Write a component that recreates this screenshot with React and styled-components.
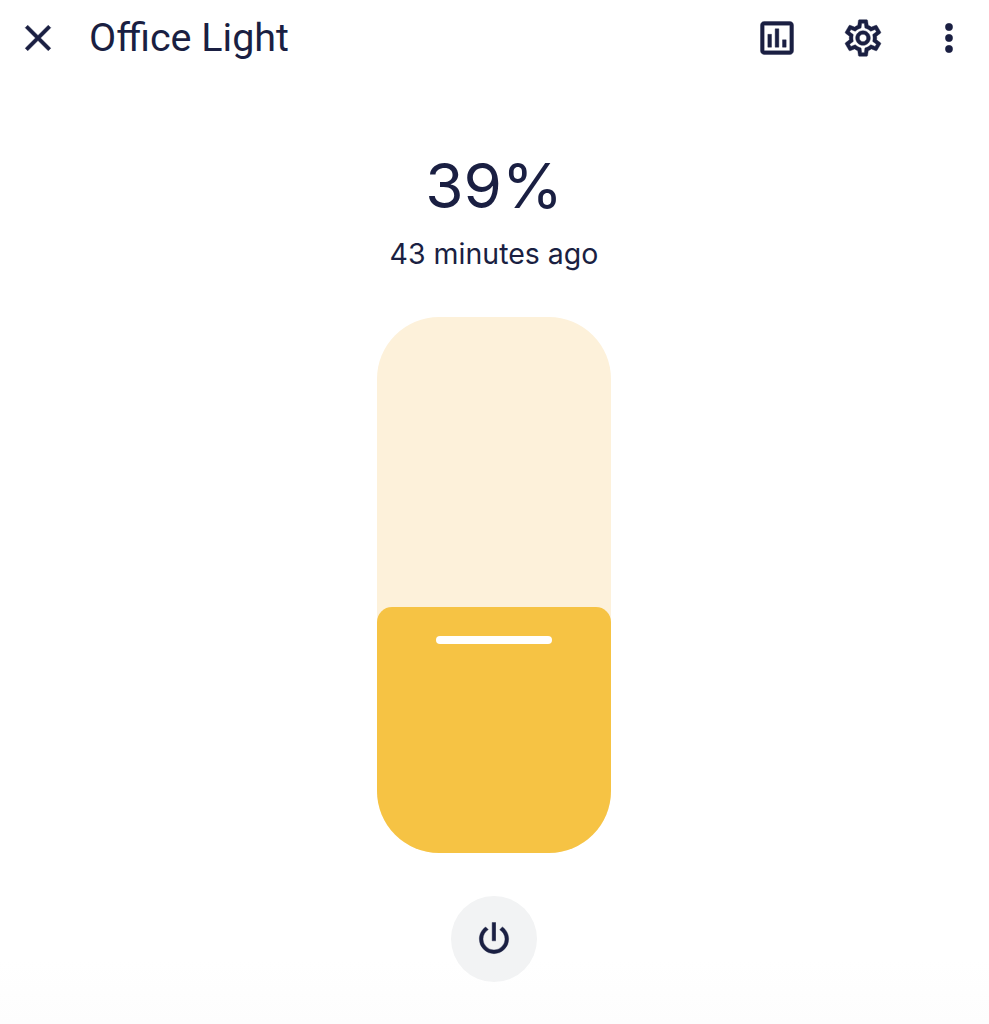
import React from "react";
import styled, { createGlobalStyle } from "styled-components";

const Global = createGlobalStyle`
  html, body { margin: 0; padding: 0; background: #ffffff; }
  #root { width: 989px; height: 1024px; overflow: hidden; }
`;

const Page = styled.main`
  width: 988px;
  height: 1024px;
  padding-right: 1px;
  display: flex;
  flex-direction: column;
  align-items: center;
  color: #1a1f42;
  background: linear-gradient(to bottom, #ffffff 960px, #fdfdfd 1024px);
`;

const Toolbar = styled.header`
  width: 100%;
  box-sizing: border-box;
  height: 76px;
  display: flex;
  align-items: center;
  padding: 0 17px 0 16px;
`;

const Title = styled.h1`
  flex: 1;
  margin: 0 0 0 29px;
  font: 400 39.5px/76px Roboto, sans-serif;
  color: #1a1f42;
`;

const Actions = styled.div`
  display: flex;
  gap: 42px;
`;

const IconBox = styled.svg`
  display: block;
  width: 44px;
  height: 44px;
  fill: #1a1f42;
  stroke: #1a1f42;
  stroke-width: 0.22;
`;

const Value = styled.div`
  margin-top: 72px;
  font: 400 62px/76px Inter, sans-serif;
`;

const Updated = styled.div`
  margin-top: 12px;
  font: 400 28.5px/36px Inter, sans-serif;
`;

const Track = styled.div`
  margin-top: 45px;
  width: 234px;
  height: 536px;
  border-radius: 62px;
  background: #fdf1da;
  overflow: hidden;
  display: flex;
  flex-direction: column;
  justify-content: flex-end;
`;

const Fill = styled.div`
  border-radius: 15px 15px 0 0;
  background: #f6c344;
  display: flex;
  justify-content: center;
  padding-top: 29px;
  box-sizing: border-box;
`;

const Handle = styled.div`
  width: 116px;
  height: 8px;
  border-radius: 4px;
  background: #ffffff;
`;

const PowerButton = styled.div`
  margin-top: 43px;
  width: 86px;
  height: 86px;
  border-radius: 50%;
  background: #f2f3f4;
  display: flex;
  align-items: center;
  justify-content: center;
`;

const Icon = ({ d }) => (
  <IconBox viewBox="0 0 24 24" aria-hidden="true">
    <path d={d} />
  </IconBox>
);

const paths = {
  close: "M19 6.41 17.59 5 12 10.59 6.41 5 5 6.41 10.59 12 5 17.59 6.41 19 12 13.41 17.59 19 19 17.59 13.41 12z",
  chart: "M9 17H7V10H9V17M13 17H11V7H13V17M17 17H15V13H17V17M19 19H5V5H19V19.1M19 3H5C3.9 3 3 3.9 3 5V19C3 20.1 3.9 21 5 21H19C20.1 21 21 20.1 21 19V5C21 3.9 20.1 3 19 3Z",
  cog: "M19.43 12.98c.04-.32.07-.64.07-.98 0-.34-.03-.66-.07-.98l2.11-1.65c.19-.15.24-.42.12-.64l-2-3.46c-.09-.16-.26-.25-.44-.25-.06 0-.12.01-.17.03l-2.49 1c-.52-.4-1.08-.73-1.69-.98l-.38-2.65C14.46 2.18 14.25 2 14 2h-4c-.25 0-.46.18-.49.42l-.38 2.65c-.61.25-1.17.59-1.69.98l-2.49-1c-.06-.02-.12-.03-.18-.03-.17 0-.34.09-.43.25l-2 3.46c-.13.22-.07.49.12.64l2.11 1.65c-.04.32-.07.65-.07.98 0 .33.03.66.07.98l-2.11 1.65c-.19.15-.24.42-.12.64l2 3.46c.09.16.26.25.44.25.06 0 .12-.01.17-.03l2.49-1c.52.4 1.08.73 1.69.98l.38 2.65c.03.24.24.42.49.42h4c.25 0 .46-.18.49-.42l.38-2.65c.61-.25 1.17-.59 1.69-.98l2.49 1c.06.02.12.03.18.03.17 0 .34-.09.43-.25l2-3.46c.12-.22.07-.49-.12-.64l-2.11-1.65zm-1.98-1.71c.04.31.05.52.05.73 0 .21-.02.43-.05.73l-.14 1.13.89.7 1.08.84-.7 1.21-1.27-.51-1.04-.42-.9.68c-.43.32-.84.56-1.25.73l-1.06.43-.16 1.13-.2 1.35h-1.4l-.19-1.35-.16-1.13-1.06-.43c-.43-.18-.83-.41-1.23-.71l-.91-.7-1.06.43-1.27.51-.7-1.21 1.08-.84.89-.7-.14-1.13c-.03-.31-.05-.54-.05-.74s.02-.43.05-.73l.14-1.13-.89-.7-1.08-.84.7-1.21 1.27.51 1.04.42.9-.68c.43-.32.84-.56 1.25-.73l1.06-.43.16-1.13.2-1.35h1.39l.19 1.35.16 1.13 1.06.43c.43.18.83.41 1.23.71l.91.7 1.06-.43 1.27-.51.7 1.21-1.07.85-.89.7.14 1.13zM12 8c-2.21 0-4 1.79-4 4s1.79 4 4 4 4-1.79 4-4-1.79-4-4-4zm0 6c-1.1 0-2-.9-2-2s.9-2 2-2 2 .9 2 2-.9 2-2 2z",
  dots: "M12,16A2,2 0 0,1 14,18A2,2 0 0,1 12,20A2,2 0 0,1 10,18A2,2 0 0,1 12,16M12,10A2,2 0 0,1 14,12A2,2 0 0,1 12,14A2,2 0 0,1 10,12A2,2 0 0,1 12,10M12,4A2,2 0 0,1 14,6A2,2 0 0,1 12,8A2,2 0 0,1 10,6A2,2 0 0,1 12,4Z",
  power: "M16.56,5.44L15.11,6.89C16.84,7.94 18,9.83 18,12A6,6 0 0,1 12,18A6,6 0 0,1 6,12C6,9.83 7.16,7.94 8.88,6.88L7.44,5.44C5.36,6.88 4,9.28 4,12A8,8 0 0,0 12,20A8,8 0 0,0 20,12C20,9.28 18.64,6.88 16.56,5.44M13,3H11V13H13",
};

export default function App() {
  const fillHeight = 246;
  return (
    <>
      <Global />
      <Page>
        <Toolbar>
          <Icon d={paths.close} />
          <Title>Office Light</Title>
          <Actions>
            <Icon d={paths.chart} />
            <Icon d={paths.cog} />
            <Icon d={paths.dots} />
          </Actions>
        </Toolbar>
        <Value>39%</Value>
        <Updated>43 minutes ago</Updated>
        <Track>
          <Fill style={{ height: `${fillHeight}px` }}>
            <Handle />
          </Fill>
        </Track>
        <PowerButton>
          <Icon d={paths.power} />
        </PowerButton>
      </Page>
    </>
  );
}
